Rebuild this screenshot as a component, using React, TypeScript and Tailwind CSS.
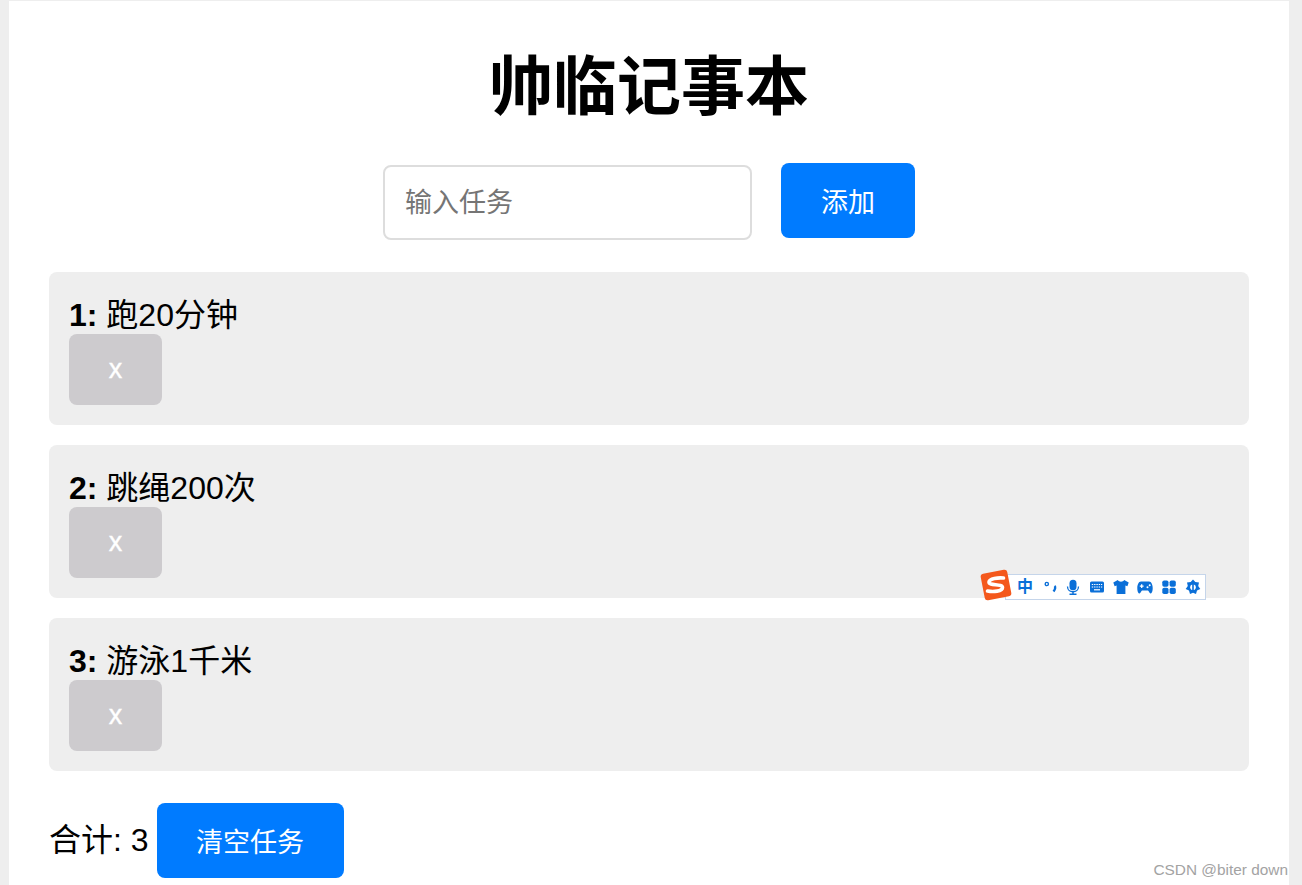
const fontStack = "font-['Liberation_Sans','Noto_Sans_CJK_SC',sans-serif]";

const tasks = [
  { id: 1, text: "跑20分钟" },
  { id: 2, text: "跳绳200次" },
  { id: 3, text: "游泳1千米" },
];

function SogouBar() {
  return (
    <div className="absolute left-[980px] top-[569px] h-[31px] w-[226px]">
      <div className="absolute bottom-0 left-[25px] right-0 top-[5px] border border-[#c5d5ea] bg-white" />
      {/* logo */}
      <svg viewBox="0 0 32 32" className="absolute left-0 top-0 h-[32px] w-[32px]">
        <rect x="2.5" y="2.5" width="27" height="27" rx="3" fill="#f4581c" transform="rotate(-11 16 16)" />
        <path d="M23.5 9 C18 8.5 9.5 9.5 9 13 C8.5 17 22.5 14.5 22.5 18.5 C22.5 22.5 13 23 7.5 22" fill="none" stroke="#fff" strokeWidth="3.6" strokeLinecap="round" />
      </svg>
      <div className="absolute left-[37px] top-[9px] w-[16px] text-center text-[16px] font-bold leading-[18px] text-[#0a6fd8]">中</div>
      <svg viewBox="0 0 16 16" className="absolute left-[64px] top-[10px] h-4 w-4" fill="none" stroke="#0a6fd8">
        <circle cx="2.8" cy="5" r="1.6" strokeWidth="1.4" />
        <path d="M10.5 7 C11.8 8 11.2 10.5 9.5 12.5" strokeWidth="2.4" />
      </svg>
      <svg viewBox="0 0 16 16" className="absolute left-[85px] top-[10px] h-[17px] w-4" fill="#0a6fd8">
        <rect x="4.5" y="0.3" width="7" height="10.4" rx="3.5" />
        <path d="M2.5 7 C2.5 14 13.5 14 13.5 7" fill="none" stroke="#0a6fd8" strokeWidth="1.3" />
        <rect x="7.3" y="11.5" width="1.4" height="3" />
        <rect x="4.5" y="14" width="7" height="1.5" />
      </svg>
      <svg viewBox="0 0 16 16" className="absolute left-[109px] top-[10px] h-4 w-4">
        <rect x="1" y="2.5" width="14" height="11" rx="1.5" fill="#0a6fd8" />
        <path d="M2.8 5.5h10.4M2.8 8h10.4" stroke="#fff" strokeWidth="1.2" strokeDasharray="1.4 0.9" />
        <path d="M5 10.8h6" stroke="#fff" strokeWidth="1.2" />
      </svg>
      <svg viewBox="0 0 16 16" className="absolute left-[133px] top-[10px] h-4 w-4" fill="#0a6fd8">
        <path d="M4.8 1 L0.3 3.4 L1.6 7.2 L3.6 6.6 V15 H12.4 V6.6 L14.4 7.2 L15.7 3.4 L11.2 1 C10 3.2 6 3.2 4.8 1 Z" />
      </svg>
      <svg viewBox="0 0 16 16" className="absolute left-[157px] top-[10px] h-4 w-4">
        <path d="M4 2.5 H12 C14.5 2.5 15.7 6 15.7 9 C15.7 13 14.5 14.5 13.5 14.5 C12.5 14.5 12 12 11 11.5 H5 C4 12 3.5 14.5 2.5 14.5 C1.5 14.5 0.3 13 0.3 9 C0.3 6 1.5 2.5 4 2.5 Z" fill="#0a6fd8" />
        <path d="M2.8 7.2h3.8M4.7 5.3v3.8" stroke="#fff" strokeWidth="1.3" />
        <circle cx="10.5" cy="8.3" r="1" fill="#fff" />
        <circle cx="12.7" cy="6.2" r="1" fill="#fff" />
      </svg>
      <svg viewBox="0 0 16 16" className="absolute left-[181px] top-[10px] h-4 w-4" fill="#0a6fd8">
        <rect x="1.3" y="1.5" width="6.2" height="6.2" rx="1.8" />
        <rect x="8.6" y="1.5" width="6.2" height="6.2" rx="1.8" />
        <rect x="1.3" y="8.8" width="6.2" height="6.2" rx="1.8" />
        <rect x="8.6" y="8.8" width="6.2" height="6.2" rx="1.8" />
      </svg>
      <svg viewBox="0 0 16 16" className="absolute left-[205px] top-[10px] h-4 w-4">
        <path d="M8 0.5 L10.3 3 L14 3.4 L13.2 7 L15.3 10 L12 11.5 L11 15 L8 13.8 L5 15 L4 11.5 L0.7 10 L2.8 7 L2 3.4 L5.7 3 Z" fill="#0a6fd8" />
        <circle cx="8" cy="8.3" r="2.8" fill="#fff" />
        <path d="M8 4.5 L8 12.5" stroke="#0a6fd8" strokeWidth="1.6" />
      </svg>
    </div>
  );
}

export default function App() {
  return (
    <div className={`${fontStack} relative h-[885px] overflow-hidden bg-[#eeeeee] pl-[9px] pt-px text-black`}>
      <div className="h-full w-[1280px] bg-white px-10 pt-[41px]">
        <h1 className="text-center text-[64px] font-bold leading-[90px]">帅临记事本</h1>

        <div className="mt-[31px] flex items-start justify-center gap-[29px]">
          <input
            placeholder="输入任务"
            className="mt-[2px] h-[75px] w-[369px] rounded-lg border-2 border-[#dddddd] px-5 pt-px text-[27px] outline-none placeholder:text-[#757575]"
          />
          <button className="h-[75px] w-[134px] rounded-lg bg-[#007bff] pt-[5px] text-[27px] text-white">添加</button>
        </div>

        <ul className="mt-[32px] flex flex-col gap-5">
          {tasks.map((task) => (
            <li key={task.id} className="h-[153px] rounded-lg bg-[#eeeeee] p-5">
              <div className="h-[42px] pt-[2px] text-[32px] leading-[42px]">
                <strong>{task.id}:</strong> {task.text}
              </div>
              <button className="h-[71px] w-[93px] rounded-lg bg-[#cdcbce] text-[27px] text-white [-webkit-text-stroke:0.4px_#ffffff]">x</button>
            </li>
          ))}
        </ul>

        <div className="mt-[32px] flex items-center gap-2">
          <span className="pb-[2px] text-[32px] leading-[42px]">合计: 3</span>
          <button className="h-[75px] w-[187px] rounded-lg bg-[#007bff] pt-[5px] text-[27px] text-white">清空任务</button>
        </div>
      </div>

      <SogouBar />
      <div className="absolute right-[14px] top-[860px] text-[15.4px] leading-[20px] text-[#a3a3a3]">CSDN @biter down</div>
    </div>
  );
}
